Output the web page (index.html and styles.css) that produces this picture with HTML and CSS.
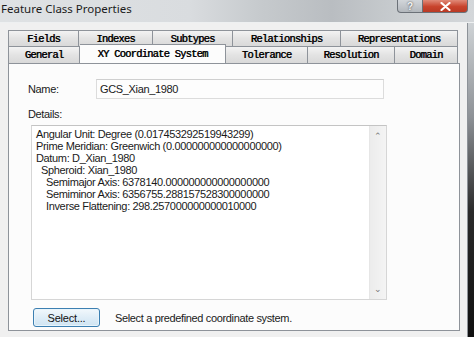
FILE: index.html
```html
<!doctype html>
<html>
  <head>
    <link rel="stylesheet" href="styles.css">
  </head>
  <body>
    <div class="window">
      <div class="titlebar">
        <span class="title">Feature Class Properties</span>
        <div class="caption-buttons">
          <span class="cap-btn help">?</span>
          <span class="cap-btn close">
            <svg width="11" height="9" viewBox="0 0 11 9">
              <path d="M1.5 1 L9.5 8 M9.5 1 L1.5 8" stroke="#fff" stroke-width="2.2" stroke-linecap="round"/>
            </svg>
          </span>
        </div>
      </div>

      <div class="frame">
        <div class="dialog">
          <div class="tabs">
            <div class="tab-row back">
              <span class="tab w71">Fields</span>
              <span class="tab w74">Indexes</span>
              <span class="tab w80">Subtypes</span>
              <span class="tab w108">Relationships</span>
              <span class="tab w117">Representations</span>
            </div>
            <div class="tab-row front">
              <span class="tab w72">General</span>
              <span class="tab w146 selected">XY Coordinate System</span>
              <span class="tab w82">Tolerance</span>
              <span class="tab w87">Resolution</span>
              <span class="tab w63">Domain</span>
            </div>
          </div>

          <div class="panel">
            <div class="field-row">
              <label class="label">Name:</label>
              <div class="textbox">GCS_Xian_1980</div>
            </div>

            <div class="label details-label">Details:</div>

            <div class="details">
              <div class="details-text">
                <div>Angular Unit: Degree (0.017453292519943299)</div>
                <div>Prime Meridian: Greenwich (0.000000000000000000)</div>
                <div>Datum: D_Xian_1980</div>
                <div class="indent1">Spheroid: Xian_1980</div>
                <div class="indent2">Semimajor Axis: 6378140.000000000000000000</div>
                <div class="indent2">Semiminor Axis: 6356755.288157528300000000</div>
                <div class="indent2">Inverse Flattening: 298.257000000000010000</div>
              </div>
              <div class="scrollbar">
                <span class="arrow">&#8963;</span>
                <span class="arrow down">&#8964;</span>
              </div>
            </div>

            <div class="select-row">
              <button class="button">Select...</button>
              <span class="hint">Select a predefined coordinate system.</span>
            </div>
          </div>
        </div>
        <div class="edge"></div>
      </div>
    </div>
  </body>
</html>
```

FILE: styles.css
```css
html, body {
  margin: 0;
  padding: 0;
}

body {
  background: #f0f0f0;
  font-family: "Liberation Sans", Arial, sans-serif;
}

.window {
  width: 474px;
  height: 337px;
  overflow: hidden;
  display: flex;
  flex-direction: column;
}

/* title bar */
.titlebar {
  height: 22px;
  flex: none;
  display: flex;
  justify-content: space-between;
  align-items: flex-start;
  background: linear-gradient(90deg, #dfe2e4 0%, #d9dcdf 40%, #c6cacd 55%, #b9bdc1 70%, #c9cdd0 85%, #d4d7da 100%);
  border-bottom: 1px solid #eef0f1;
}

.title {
  font-family: "Noto Sans", sans-serif;
  font-size: 11.5px;
  color: #1b1b1b;
  line-height: 18px;
  padding-left: 1px;
}

.caption-buttons {
  display: flex;
  margin-right: 6px;
}

.cap-btn {
  height: 12px;
  display: flex;
  align-items: center;
  justify-content: center;
  border: 1px solid #6b7178;
  border-top: none;
}

.help {
  width: 24px;
  border-radius: 0 0 0 4px;
  background: linear-gradient(#d2d6da, #b3b8bd);
  color: #f4f4f4;
  font-size: 10px;
  font-weight: bold;
  text-shadow: 0 0 2px #333;
}

.close {
  width: 44px;
  border-left: none;
  border-radius: 0 0 4px 0;
  background: linear-gradient(#e08a78, #c8432c 55%, #b93a25);
}

/* body */
.frame {
  flex: 1;
  display: flex;
}

.dialog {
  width: 468px;
  flex: none;
  padding: 7px 0 0 8px;
  box-sizing: border-box;
  background: #f0f0f0;
  border-right: 1px solid #8d9298;
}

.edge {
  flex: 1;
  background: linear-gradient(#cfd3d6, #8d9196 30%, #2a2a2a 60%, #101010);
}

/* tabs */
.tabs {
  width: 451px;
}

.tab-row {
  display: flex;
}

.tab {
  box-sizing: border-box;
  display: flex;
  align-items: center;
  justify-content: center;
  font-family: "Liberation Mono", monospace;
  font-size: 10.5px;
  letter-spacing: -0.8px;
  color: #000;
  text-shadow: 0.4px 0 0 #222;
  border: 1px solid #8e939a;
  border-left: none;
  border-bottom: none;
  background: linear-gradient(#f3f3f3, #e3e3e3 50%, #d9d9d9);
}

.tab:first-child {
  border-left: 1px solid #8e939a;
}

.back .tab {
  height: 16px;
}

.front .tab {
  height: 17px;
}

.tab.selected {
  background: #fcfcfc;
  height: 19px;
  margin-top: -2px;
  margin-bottom: -1px;
  position: relative;
  z-index: 1;
  align-items: flex-start;
  padding-top: 3px;
}

.w63 { width: 63px; }
.w71 { width: 71px; }
.w72 { width: 72px; }
.w74 { width: 74px; }
.w80 { width: 80px; }
.w82 { width: 82px; }
.w87 { width: 87px; }
.w108 { width: 108px; }
.w117 { width: 117px; }
.w146 { width: 146px; }

/* panel */
.panel {
  width: 452px;
  height: 268px;
  box-sizing: border-box;
  background: #fcfcfc;
  border: 1px solid #8e939a;
  padding: 15px 0 0 19px;
  font-size: 11px;
  letter-spacing: -0.35px;
  color: #1a1a1a;
}

.field-row {
  display: flex;
  align-items: center;
}

.label {
  width: 68px;
}

.textbox {
  width: 288px;
  height: 20px;
  box-sizing: border-box;
  border: 1px solid #dcdcdc;
  border-top-color: #cfcfcf;
  background: #fdfdfd;
  padding: 2px 0 0 3px;
  line-height: 14px;
}

.details-label {
  margin-top: 8px;
  line-height: 14px;
}

.details {
  margin: 4px 0 0 3px;
  width: 356px;
  height: 175px;
  box-sizing: border-box;
  border: 1px solid #d6d6d6;
  border-top-color: #c4c4c4;
  background: #fff;
  display: flex;
}

.details-text {
  flex: 1;
  padding: 2px 0 0 4px;
  line-height: 12px;
  white-space: nowrap;
  overflow: hidden;
}

.indent1 { padding-left: 5px; }
.indent2 { padding-left: 10px; }

.scrollbar {
  width: 16px;
  flex: none;
  background: linear-gradient(90deg, #ececec, #f4f4f4);
  border-left: 1px solid #e6e6e6;
  display: flex;
  flex-direction: column;
  justify-content: space-between;
  align-items: center;
}

.arrow {
  font-size: 9px;
  color: #777;
  line-height: 12px;
  padding-top: 4px;
}

.arrow.down {
  padding: 0 0 4px;
}

.select-row {
  display: flex;
  align-items: center;
  margin: 8px 0 0 5px;
}

.button {
  width: 67px;
  height: 19px;
  border: 1px solid #3c7fb1;
  border-radius: 3px;
  background: linear-gradient(#f2f8fc, #dfedf7 50%, #cfe4f2);
  font-family: "Liberation Sans", Arial, sans-serif;
  font-size: 11px;
  letter-spacing: -0.2px;
  color: #111;
  padding: 0;
  box-shadow: inset 0 0 0 1px #e8f4fb;
}

.hint {
  margin-left: 15px;
}
```
